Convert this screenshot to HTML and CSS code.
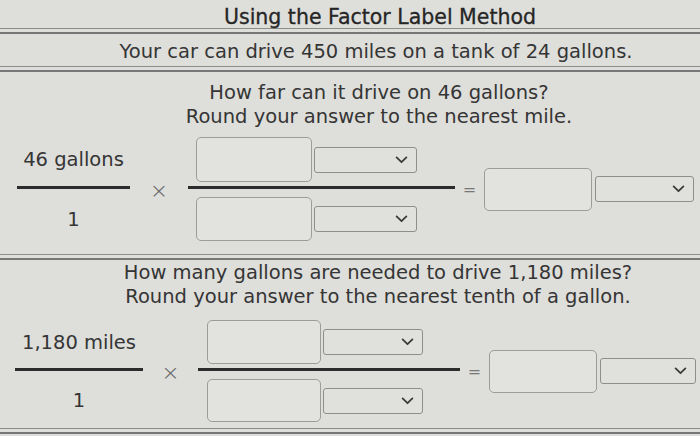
FILE: index.html
```html
<!DOCTYPE html>
<html>
<head>
<meta charset="utf-8">
<link rel="stylesheet" href="styles.css">
</head>
<body>
<div class="page">
  <div class="title">Using the Factor Label Method</div>
  <div class="divider"></div>
  <div class="intro">Your car can drive 450 miles on a tank of 24 gallons.</div>
  <div class="divider"></div>

  <div class="section s1">
    <div class="question">
      <div>How far can it drive on 46 gallons?</div>
      <div>Round your answer to the nearest mile.</div>
    </div>
    <div class="equation">
      <div class="given">
        <div class="cell top">46 gallons</div>
        <div class="bar"></div>
        <div class="cell bottom">1</div>
      </div>
      <div class="op times">×</div>
      <div class="factor">
        <div class="frow top">
          <div class="input"></div>
          <div class="select"><svg viewBox="0 0 14 9" class="chev"><path d="M1.5 1.5 L7 7 L12.5 1.5" /></svg></div>
        </div>
        <div class="bar"></div>
        <div class="frow bottom">
          <div class="input"></div>
          <div class="select"><svg viewBox="0 0 14 9" class="chev"><path d="M1.5 1.5 L7 7 L12.5 1.5" /></svg></div>
        </div>
      </div>
      <div class="op equals">=</div>
      <div class="result">
        <div class="input rin"></div>
        <div class="select rsel"><svg viewBox="0 0 14 9" class="chev"><path d="M1.5 1.5 L7 7 L12.5 1.5" /></svg></div>
      </div>
    </div>
  </div>
  <div class="divider"></div>

  <div class="section s2">
    <div class="question">
      <div>How many gallons are needed to drive 1,180 miles?</div>
      <div>Round your answer to the nearest tenth of a gallon.</div>
    </div>
    <div class="equation">
      <div class="given">
        <div class="cell top">1,180 miles</div>
        <div class="bar"></div>
        <div class="cell bottom">1</div>
      </div>
      <div class="op times">×</div>
      <div class="factor">
        <div class="frow top">
          <div class="input"></div>
          <div class="select"><svg viewBox="0 0 14 9" class="chev"><path d="M1.5 1.5 L7 7 L12.5 1.5" /></svg></div>
        </div>
        <div class="bar"></div>
        <div class="frow bottom">
          <div class="input"></div>
          <div class="select"><svg viewBox="0 0 14 9" class="chev"><path d="M1.5 1.5 L7 7 L12.5 1.5" /></svg></div>
        </div>
      </div>
      <div class="op equals">=</div>
      <div class="result">
        <div class="input rin"></div>
        <div class="select rsel"><svg viewBox="0 0 14 9" class="chev"><path d="M1.5 1.5 L7 7 L12.5 1.5" /></svg></div>
      </div>
    </div>
  </div>
  <div class="divider"></div>
</div>
</body>
</html>
```

FILE: styles.css
```css
html, body {
  margin: 0;
  padding: 0;
  background: #dededb;
}
.page {
  width: 700px;
  height: 436px;
  overflow: hidden;
  background: #dededb;
  color: #353535;
  font-family: "DejaVu Sans", sans-serif;
  font-size: 19.5px;
}
.title {
  height: 28px;
  box-sizing: border-box;
  padding: 5px 0 0 60px;
  line-height: 24px;
  text-align: center;
  font-size: 20.5px;
  color: #262626;
  -webkit-text-stroke: 0.3px #262626;
}
.divider {
  height: 3px;
  border-top: 1px solid #8c8c8c;
  border-bottom: 2px solid #777;
}
.intro {
  height: 32px;
  box-sizing: border-box;
  padding: 6px 0 2px 52px;
  line-height: 24px;
  text-align: center;
}
.question {
  text-align: center;
  line-height: 24px;
}
.s1 {
  height: 182px;
  box-sizing: border-box;
  padding-top: 9px;
}
.s1 .question { padding-left: 58px; }
.s2 {
  height: 168px;
  box-sizing: border-box;
  padding-top: 1px;
}
.s2 .question { padding-left: 56px; }
.equation {
  display: flex;
  align-items: center;
}
.s1 .equation { margin-top: 8px; padding-left: 17px; }
.s2 .equation { margin-top: 11px; padding-left: 15px; }
.given, .factor {
  display: flex;
  flex-direction: column;
}
.given .cell {
  display: flex;
  align-items: center;
  justify-content: center;
}
.bar {
  height: 3px;
  background: #2c2c2c;
  margin-top: 4px;
}
.top { height: 45px; }
.bottom { height: 44px; margin-top: 8px; }
.s2 .top { height: 44px; }
.s2 .bottom { height: 43px; }
.s1 .given { width: 113px; }
.s2 .given { width: 128px; }
.op {
  display: flex;
  justify-content: center;
  color: #666;
}
.times {
  font-size: 22px;
  font-weight: 300;
  margin-top: 2px;
}
.equals {
  font-size: 16px;
  color: #777;
}
.s1 .times { width: 58px; }
.s2 .times { width: 55px; }
.s1 .factor { width: 267px; }
.s2 .factor { width: 262px; }
.frow {
  display: flex;
  align-items: center;
  gap: 2px;
}
.s1 .frow { padding-left: 8px; }
.s2 .frow { padding-left: 9px; }
.input {
  box-sizing: border-box;
  height: 100%;
  border: 1.5px solid #9c9c9a;
  border-radius: 5px;
  background: #e2e2df;
}
.s1 .frow .input { width: 116px; }
.s2 .frow .input { width: 114px; }
.select {
  box-sizing: border-box;
  height: 26px;
  border: 1.5px solid #8e8e8c;
  border-radius: 3px;
  background: #e0e0dd;
  display: flex;
  align-items: center;
  justify-content: flex-end;
  padding-right: 8px;
}
.s1 .frow .select { width: 103px; }
.s2 .frow .select { width: 100px; }
.chev {
  width: 13px;
  height: 8px;
  fill: none;
  stroke: #3a3a3a;
  stroke-width: 2;
  stroke-linecap: round;
  stroke-linejoin: round;
}
.s1 .equals { width: 29px; }
.s2 .equals { width: 29px; }
.result {
  display: flex;
  align-items: center;
  gap: 3px;
}
.rin { width: 108px; height: 43px; }
.s1 .rsel { width: 99px; }
.s2 .rsel { width: 96px; }
```
